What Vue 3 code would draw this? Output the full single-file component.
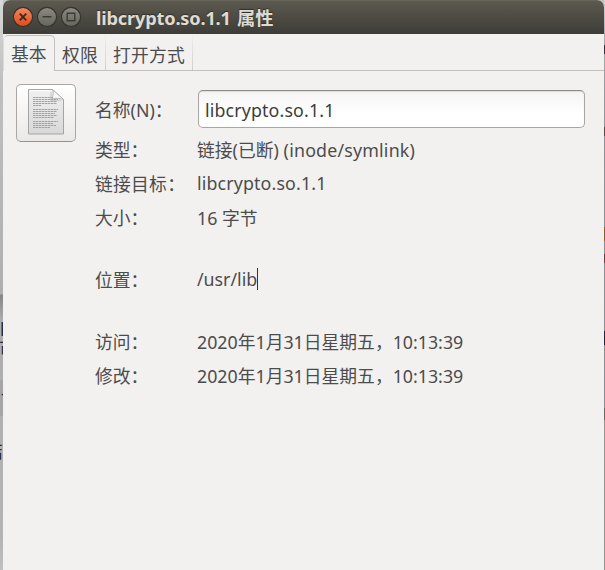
<script setup>
const tabs = [
  { name: '基本', cls: 'active' },
  { name: '权限', cls: 'second' },
  { name: '打开方式', cls: 'third' },
]
const rows = [
  { label: '类型：', parts: [['链接(已断)', ''], [' (inode/symlink)', 'mime']] },
  { label: '链接目标：', wide: true, parts: [['libcrypto.so.1.1', 'lib']] },
  { label: '大小：', parts: [['16 ', 'num'], ['字节', '']] },
  { label: '位置：', gap: true, caret: true, parts: [['/usr/lib', 'path']] },
  { label: '访问：', gap: true, parts: [['2020年1月31日星期五，', 'date'], ['10:13:39', 'time']] },
  { label: '修改：', parts: [['2020年1月31日星期五，', 'date'], ['10:13:39', 'time']] },
]
// [y, right end] of each text line on the document icon
const lines = [
  [13.5, 37], [15.5, 42], [17.5, 41], [19.5, 41], [21.5, 25],
  [25.5, 42], [27.5, 41], [29.5, 39], [31.5, 41], [33.5, 38],
  [37.5, 42], [39.5, 37], [41.5, 40], [43.5, 34],
]
</script>

<template>
  <div class="screen" lang="zh-CN">
    <div class="behind left">
      <div class="shade"></div>
      <span class="frag f1">p</span>
      <span class="frag f2">可</span>
      <span class="frag f3">-</span>
      <span class="frag f4">结</span>
    </div>
    <main class="window">
      <header class="titlebar">
        <svg class="controls" width="70" height="24" viewBox="0 0 70 24">
          <defs>
            <linearGradient id="red" x1="0" y1="0" x2="0" y2="1">
              <stop offset="0" stop-color="#f58862" /><stop offset="1" stop-color="#df4a16" />
            </linearGradient>
            <linearGradient id="grey" x1="0" y1="0" x2="0" y2="1">
              <stop offset="0" stop-color="#8b8a83" /><stop offset="1" stop-color="#65645d" />
            </linearGradient>
          </defs>
          <g stroke="#34332e" stroke-width="1.2">
            <circle cx="11" cy="12" r="9.6" fill="url(#red)" />
            <circle cx="35" cy="12" r="9.6" fill="url(#grey)" />
            <circle cx="59" cy="12" r="9.6" fill="url(#grey)" />
          </g>
          <g fill="none" stroke="#3c3a34" stroke-width="1.4">
            <path d="M7.7 8.7l6.6 6.6M14.3 8.7l-6.6 6.6" stroke="#39291f" stroke-width="1.8" />
            <path d="M30.5 11.8h9" />
            <path d="M55.2 8.2h7.6v7.6h-7.6z" />
          </g>
        </svg>
        <h1><span class="lat">libcrypto.so.1.1</span> 属性</h1>
      </header>
      <nav class="tabs">
        <div v-for="t in tabs" :key="t.name" class="tab" :class="t.cls">{{ t.name }}</div>
      </nav>
      <section class="body">
        <button class="icon">
          <svg width="60" height="58" viewBox="0 0 60 58">
            <defs>
              <linearGradient id="paper" x1="0" y1="0" x2="0" y2="1">
                <stop offset="0" stop-color="#f0f0f0" /><stop offset="1" stop-color="#d8d8d8" />
              </linearGradient>
            </defs>
            <path d="M12.5 5.5h24l11 10v34.5h-35z" fill="url(#paper)" stroke="#a4a4a4" />
            <path d="M13.5 6.5h23" stroke="#fff" />
            <path d="M36.5 5.5c1.5 3 .5 6-.5 9.500 4-1 8-1 11.500.5z" fill="#f9f9f9" stroke="#aaa" stroke-width=".8" />
            <path d="M35 8v8.5h10" fill="none" stroke="#bdbdbd" stroke-width="1.5" opacity=".6" />
            <path
              v-for="[y, end] in lines" :key="y" :d="`M17 ${y}H${end}`"
              stroke="#a2a2a2" stroke-width="1" stroke-dasharray="2.5 .5"
            />
          </svg>
        </button>
        <div class="form">
          <div class="row name">
            <label>名称(N)：</label>
            <div class="entry"><span class="lib">libcrypto.so.1.1</span></div>
          </div>
          <div v-for="r in rows" :key="r.label" class="row" :class="{ gap: r.gap }">
            <label :class="{ wide: r.wide }">{{ r.label }}</label>
            <div class="value">
              <span v-for="(p, i) in r.parts" :key="i" :class="p[1]">{{ p[0] }}</span>
              <i v-if="r.caret" class="caret"></i>
            </div>
          </div>
        </div>
      </section>
    </main>
    <div class="behind right">
      <i class="mark m1"></i><i class="mark m2"></i><i class="mark m3"></i>
      <i class="mark m4"></i><i class="mark m5"></i><i class="mark m6"></i>
    </div>
  </div>
</template>

<style>
body { margin: 0; overflow: hidden; }
</style>
<style scoped>
* { box-sizing: border-box; }
.screen {
  width: 605px; height: 570px; display: grid; grid-template-columns: 3px 601px 1px;
  overflow: hidden; color: #4c4c4c; background: #c2c2c2;
  font: 17.8px/34px "Noto Sans", "Noto Sans CJK SC", sans-serif;
}
.behind { position: relative; overflow: hidden; height: 570px; }
.left { background: linear-gradient(#d8d8d8 0, #c0c0c0 80px, #afafaf 294px, #858585 295px, #adadad 320px, #b4b4b4 540px, #c0c0c0); }
.right { background: linear-gradient(#d0d0d0 0, #a5a8a8 40px, #8d9192 130px, #858a8c 400px, #99948d 420px, #96918b); }
.shade { position: absolute; top: 380px; width: 3px; height: 36px; background: #a5a5a5; }
.frag { position: absolute; color: #252a36; line-height: 20px; }
.f1 { left: 0; top: 315px; }
.f2 { left: -1px; top: 339px; }
.f3 { left: 1px; top: 383px; }
.f4 { left: -15px; top: 441px; }
.mark { position: absolute; left: 0; width: 1px; background: #35303e; }
.m1 { top: 45px; height: 9px; }
.m2 { top: 127px; height: 9px; background: #59494a; }
.m3 { top: 227px; height: 14px; background: #925e25; }
.m4 { top: 254px; height: 9px; background: #6c403e; }
.m5 { top: 331px; height: 14px; background: #242341; }
.m6 { top: 408px; height: 12px; background: #6b6a5c; }
.window { background: #f2f1f0; border-radius: 7px 7px 0 0; overflow: hidden; height: 570px; }
.titlebar {
  height: 34px; display: flex; padding-left: 9px;
  background: linear-gradient(#5c594f, #3d3c37); border-top: 1px solid #67645a;
}
.controls { margin-top: 4px; flex: none; }
h1 {
  margin: 0 0 0 14px; font-size: 18.2px; line-height: 34px; font-weight: 700;
  color: #dfdbd2; white-space: pre; text-shadow: 0 -1px 1px #302f2b; word-spacing: 1.5px;
}
h1 .lat { letter-spacing: -.18px; }
.tabs { display: flex; height: 37px; border-bottom: 1px solid #c4c0be; }
.tab { height: 36px; padding-top: 4px; }
.active {
  width: 52px; margin-top: 1px; padding: 1px 0 0 7px; background: #f2f1f0;
  border: 1px solid #c4bfbc; border-bottom: 0; border-left-color: #dedad8; border-radius: 5px 5px 0 0;
}
.second, .third { border-right: 1px solid; border-image: linear-gradient(#f2f1f0, #cfcbc9) 1; }
.second { width: 51px; padding-left: 7px; letter-spacing: .2px; }
.third { width: 87px; padding-left: 7px; letter-spacing: .2px; }
.body { display: flex; padding: 13px 0 0 13px; }
.icon {
  width: 60px; height: 58px; padding: 0; flex: none; overflow: hidden;
  border: 1px solid #aaa6a3; border-bottom-color: #95918e; border-radius: 5px;
  background: linear-gradient(#fff, #eae9e7); display: flex;
}
.icon svg { margin: -1px; flex: none; }
.form { margin: 6px 0 0 19px; width: 490px; }
.row { display: grid; grid-template-columns: 102px 1fr; height: 34px; white-space: pre; }
.row.gap { margin-top: 28px; }
.row.name { height: 38px; margin-bottom: 5px; line-height: 40px; }
.wide { letter-spacing: .25px; }
.entry {
  height: 38px; margin-left: 1px; padding-left: 6px; line-height: 38px; color: #3c3c3c;
  border: 1px solid #aaa5a1; border-top-color: #8e8a87; border-radius: 5px;
  background: linear-gradient(#f4f4f4, #fff 60%); box-shadow: inset 0 1px 1px #ddd;
}
.lib { letter-spacing: .15px; }
.mime { letter-spacing: .2px; }
.value { display: flex; }
.value .lib, .value .path { margin-top: -1px; }
.caret { width: 1px; height: 22px; margin-top: 5px; background: #333; }
</style>
